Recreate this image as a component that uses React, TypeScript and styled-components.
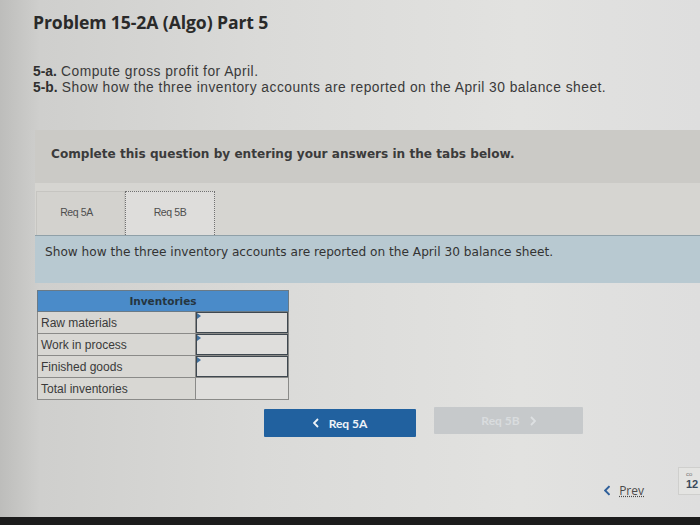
import * as React from 'react'
import styled, { createGlobalStyle } from 'styled-components'

const GlobalStyle = createGlobalStyle`
    html, body {
        margin: 0;
        padding: 0;
        background: #c9c9c7;
    }
    * { box-sizing: border-box; }
`

const Screen = styled.div`
    position: relative;
    width: 700px;
    height: 525px;
    overflow: hidden;
    display: flex;
    flex-direction: column;
    background: linear-gradient(90deg, #bdbdbb 0px, #cfcfcd 40px, #dadad8 260px, #e2e2e0 520px, #dedede 700px);
    font-family: Lato, 'Open Sans', sans-serif;
`

const Title = styled.h1`
    margin: 12px 0 0 33px;
    font-family: 'Open Sans', Lato, sans-serif;
    font-size: 17.6px;
    line-height: 20px;
    font-weight: 700;
    letter-spacing: -0.1px;
    color: #2a2a2a;
`

const Prompts = styled.div`
    margin: 32px 0 0 33px;
    font-family: 'Liberation Sans', Arial, sans-serif;
    font-size: 13.8px;
    line-height: 16px;
    letter-spacing: 0.48px;
    color: #3a3a3a;
    b { font-weight: 700; letter-spacing: 0; color: #2f2f2f; }
`

const Card = styled.div`
    margin: 34px 0 0 35px;
    display: flex;
    flex-direction: column;
`

const Instructions = styled.div`
    height: 53px;
    padding: 17px 0 0 16px;
    background: #cbcac6;
    font-family: 'DejaVu Sans', Verdana, sans-serif;
    font-size: 12.1px;
    font-weight: 700;
    color: #3b3b3b;
`

const TabRow = styled.div`
    height: 52px;
    padding: 8px 0 0 1px;
    display: flex;
    align-items: stretch;
    background: #d6d5d1;
`

const Tab = styled.div<{ $active?: boolean }>`
    width: ${p => p.$active ? 90 : 89}px;
    display: flex;
    align-items: center;
    justify-content: center;
    padding: 0 ${p => p.$active ? 0 : 8}px 3px 0;
    font-family: 'Liberation Sans', Arial, sans-serif;
    font-size: 10.5px;
    letter-spacing: -0.4px;
    color: #4e4e4e;
    background: ${p => p.$active ? '#dedddb' : '#d3d2ce'};
    border: ${p => p.$active ? '1px dotted #707070' : '1px solid #c6c5c1'};
    border-bottom: none;
`

const Panel = styled.div`
    height: 48px;
    padding: 9px 0 0 10px;
    background: #b8c9d1;
    border-top: 1px solid #8fa0a8;
    font-family: 'DejaVu Sans', Verdana, sans-serif;
    font-size: 12.15px;
    color: #333;
`

const Table = styled.table`
    margin: 7px 0 0 37px;
    width: 252px;
    border-collapse: collapse;
    font-family: 'Liberation Sans', Arial, sans-serif;
    font-size: 12px;
    color: #3a3a3a;
`

const HeadCell = styled.th`
    height: 21px;
    padding: 0;
    background: #4a8bc9;
    border: 1px solid #6a7a86;
    font-family: 'DejaVu Sans', Verdana, sans-serif;
    font-size: 10.5px;
    font-weight: 700;
    color: #253540;
`

const LabelCell = styled.td`
    height: 22px;
    width: 158px;
    padding: 0 0 0 3px;
    background: #d8d7d3;
    border: 1px solid #8a8a88;
`

const InputCell = styled.td<{ $input?: boolean }>`
    position: relative;
    padding: 0;
    background: #dfdedc;
    border: 1px solid #8a8a88;
    box-shadow: ${p => p.$input ? 'inset 0 0 0 1px #3f4850' : 'none'};
`

const Marker = styled.span`
    position: absolute;
    left: 1px;
    top: 1px;
    width: 0;
    height: 0;
    border-top: 3px solid transparent;
    border-bottom: 3px solid transparent;
    border-left: 4px solid #3f6f9c;
`

const ButtonRow = styled.div`
    margin: 9px 0 0 264px;
    display: flex;
    gap: 18px;
    align-items: flex-start;
`

const NavButton = styled.div<{ $disabled?: boolean }>`
    width: ${p => p.$disabled ? 149 : 152}px;
    height: ${p => p.$disabled ? 27 : 28}px;
    margin-top: ${p => p.$disabled ? -2 : 0}px;
    display: flex;
    align-items: center;
    justify-content: center;
    gap: 10px;
    background: ${p => p.$disabled ? '#c6c9cb' : '#21619f'};
    color: ${p => p.$disabled ? '#d9dcde' : '#eef3f8'};
    font-family: Lato, 'Open Sans', sans-serif;
    font-size: 12px;
    font-weight: 700;
    border-radius: 1px;
`

const Footer = styled.div`
    margin-top: auto;
    height: 50px;
    display: flex;
    align-items: flex-start;
    justify-content: flex-end;
    gap: 34px;
`

const PrevLink = styled.div`
    margin-top: 15px;
    display: flex;
    align-items: center;
    gap: 9px;
    font-family: 'Open Sans', Lato, sans-serif;
    font-size: 12px;
    color: #4a4a4a;
    span { text-decoration: underline dotted; }
`

const CounterBox = styled.div`
    width: 22px;
    height: 28px;
    padding: 3px 0 0 7px;
    border: 1px solid #cfcfcd;
    border-right: none;
    background: #e4e4e2;
    font-family: 'Liberation Sans', Arial, sans-serif;
    font-size: 6px;
    line-height: 7px;
    color: #777;
    overflow: hidden;
    strong { display: block; font-size: 11px; line-height: 12px; color: #3a4a5a; }
`

const Bezel = styled.div`
    height: 8px;
    background: #1c1c1c;
`

const Chevron = ({ dir, color, size = 10 }: { dir: 'left' | 'right', color: string, size?: number }) => (
    <svg width={size * 0.6} height={size} viewBox="0 0 6 10">
        <path d={dir === 'left' ? 'M5 1 L1 5 L5 9' : 'M1 1 L5 5 L1 9'} fill="none" stroke={color} strokeWidth="1.8" />
    </svg>
)

export default function App() {
    const rows = ['Raw materials', 'Work in process', 'Finished goods']

    return (
        <>
            <GlobalStyle />
            <Screen>
                <Title>Problem 15-2A (Algo) Part 5</Title>

                <Prompts>
                    <div><b>5-a.</b> Compute gross profit for April.</div>
                    <div><b>5-b.</b> Show how the three inventory accounts are reported on the April 30 balance sheet.</div>
                </Prompts>

                <Card>
                    <Instructions>Complete this question by entering your answers in the tabs below.</Instructions>
                    <TabRow>
                        <Tab>Req 5A</Tab>
                        <Tab $active>Req 5B</Tab>
                    </TabRow>
                    <Panel>Show how the three inventory accounts are reported on the April 30 balance sheet.</Panel>
                </Card>

                <Table>
                    <thead>
                        <tr><HeadCell colSpan={2}>Inventories</HeadCell></tr>
                    </thead>
                    <tbody>
                        {rows.map(r => (
                            <tr key={r}>
                                <LabelCell>{r}</LabelCell>
                                <InputCell $input><Marker /></InputCell>
                            </tr>
                        ))}
                        <tr>
                            <LabelCell>Total inventories</LabelCell>
                            <InputCell />
                        </tr>
                    </tbody>
                </Table>

                <ButtonRow>
                    <NavButton><Chevron dir="left" color="#eef3f8" />Req 5A</NavButton>
                    <NavButton $disabled>Req 5B<Chevron dir="right" color="#dde0e2" /></NavButton>
                </ButtonRow>

                <Footer>
                    <PrevLink><Chevron dir="left" color="#2f5f9a" size={11} /><span>Prev</span></PrevLink>
                    <CounterBox>co<strong>12</strong></CounterBox>
                </Footer>
                <Bezel />
            </Screen>
        </>
    )
}
